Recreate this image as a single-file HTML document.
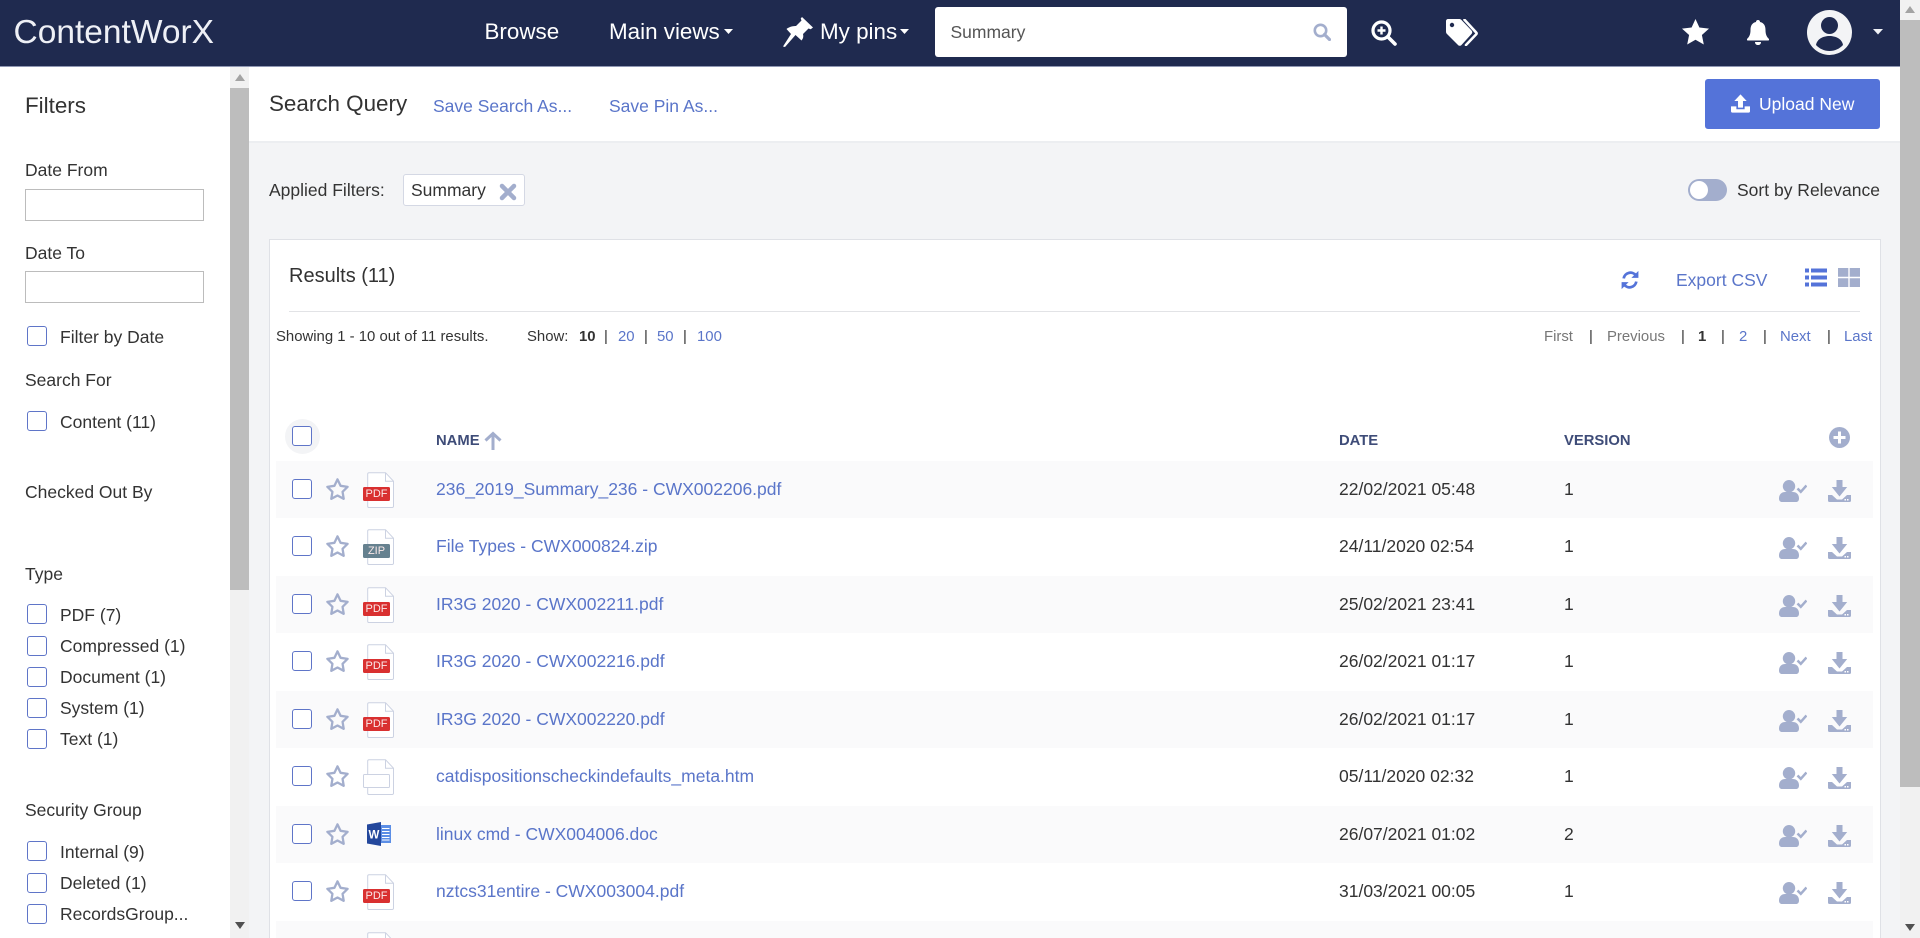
<!DOCTYPE html>
<html lang="en"><head><meta charset="utf-8"><title>ContentWorX</title>
<style>
html,body{margin:0;padding:0;width:1920px;height:938px;overflow:hidden;background:#fff}
body{position:relative;font-family:"Liberation Sans",Arial,sans-serif;font-size:17.5px;color:#333;}
.t,.b,svg.i{position:absolute}
.t{white-space:nowrap;line-height:20px;transform:translateY(-10px)}
.l{color:#5a75c9}
.s{font-size:14.9px}
.g{color:#777}
.h{font-size:14.8px;font-weight:bold;color:#3e4c78}
.cb{position:absolute;width:18px;height:18px;border:1.5px solid #5f75c8;border-radius:3px;background:#fff}
.r{position:absolute;left:276px;width:1597px;height:57.55px}
.r.o{background:#fafafb}
.r .t{top:28px}
.r .cb{left:16px;top:18px}
.n{left:160px;color:#5a75c9}
.d{left:1063px}
.v{left:1288px}
.badge{position:absolute;left:87px;top:26px;width:27px;height:14px;border-radius:1.5px;color:#fbe9e9;font-size:11px;line-height:14px;text-align:center}
</style></head><body>
<svg width="0" height="0" style="position:absolute">
<defs>
<symbol id="star" viewBox="2 2 20 20"><path d="M12 3.2l2.7 5.6 6.100.9-4.400 4.300 1 6.100L12 17.200l-5.400 2.900 1-6.100-4.400-4.300 6.100-.9z" fill="none" stroke="#a3aecd" stroke-width="2" stroke-linejoin="round"/></symbol>
<symbol id="doc" viewBox="0 0 32 36"><path d="M6 .7h16.500l8 8.500v25a1.300 1.300 0 0 1-1.300 1.300H6a1.300 1.300 0 0 1-1.300-1.300V2A1.300 1.300 0 0 1 6 .7z" fill="#fff" stroke="#ccd2e2" stroke-width="1"/><path d="M22.500.7v8.500h8" fill="none" stroke="#ccd2e2" stroke-width="1"/></symbol>
<symbol id="uc" viewBox="0 0 28 22"><circle cx="10" cy="6.200" r="6.200" fill="#a3aecd"/><path d="M0 18.500c0-4.500 3-6.500 6-6.500h8c3 0 6 2 6 6.500 0 2.300-1.200 3.500-3 3.500H3c-1.800 0-3-1.200-3-3.500z" fill="#a3aecd"/><path d="M18.500 8.500l3.300 3.300 5.700-6.300" fill="none" stroke="#a3aecd" stroke-width="2.500"/></svg-placeholder></symbol>
<symbol id="dl" viewBox="0 0 23 22"><path d="M8.500 0h6v7h4.700l-7.700 9.500L3.800 7h4.700z" fill="#a3aecd"/><path d="M0 15h4l5 4.500h5l5-4.500h4v5.500a1.500 1.500 0 0 1-1.500 1.500h-20A1.500 1.500 0 0 1 0 20.500z" fill="#a3aecd"/><rect x="16.500" y="19" width="1.500" height="1.500" fill="#fff"/><rect x="19" y="19" width="1.500" height="1.500" fill="#fff"/></symbol>
</defs></svg>

<!-- NAV -->
<div class="b" style="left:0;top:0;width:1900px;height:66px;background:#1f2a4f;border-bottom:1px solid #8f97b3"></div>
<div class="t" style="left:13.500px;top:33px;font-size:33.500px;line-height:40px;transform:translateY(-20px);color:#eef0f6">ContentWorX</div>
<div class="t" style="left:484.500px;top:32px;color:#fff;font-size:22.400px">Browse</div>
<div class="t" style="left:609px;top:32px;color:#fff;font-size:22.400px">Main views</div>
<svg class="i" style="left:724px;top:29px" width="9" height="6"><path d="M0 0h9L4.500 5z" fill="#fff"/></svg>
<svg class="i" style="left:783px;top:17px" width="31" height="30" viewBox="0 0 31 30"><path d="M19 0l11 10.500-2.300 1.800-2.200-.8-5.500 5.500c.8 3-.2 5-1.500 6.500l-6-5.500L2 30l-2-.5 8-12.500-4.500-5c2-1.700 6-3.200 9.500-3l5.500-5.500-.8-2z" fill="#fff"/></svg>
<div class="t" style="left:820px;top:32px;color:#fff;font-size:22.400px">My pins</div>
<svg class="i" style="left:900px;top:29px" width="9" height="6"><path d="M0 0h9L4.500 5z" fill="#fff"/></svg>
<div class="b" style="left:935px;top:7px;width:412px;height:50px;background:#fff;border-radius:3px"></div>
<div class="t" style="left:950.500px;top:32px;color:#555">Summary</div>
<svg class="i" style="left:1313px;top:23px" width="18" height="18" viewBox="0 0 18 18"><circle cx="7.500" cy="7.500" r="5.700" fill="none" stroke="#a3aecd" stroke-width="2.600"/><path d="M11.500 11.500l5 5" stroke="#a3aecd" stroke-width="3.200" stroke-linecap="round"/></svg>
<svg class="i" style="left:1371px;top:20px" width="26" height="26" viewBox="0 0 26 26"><circle cx="10.500" cy="10.500" r="8.500" fill="none" stroke="#fff" stroke-width="3.200"/><path d="M17 17l7 7" stroke="#fff" stroke-width="3.600" stroke-linecap="round"/><path d="M10.500 6.500v8M6.500 10.500h8" stroke="#fff" stroke-width="2.400"/></svg>
<svg class="i" style="left:1446px;top:19px" width="33" height="27" viewBox="0 0 33 27"><path d="M2 0h11c1 0 1.800.3 2.500 1l10 10.500c1 1 1 2.500 0 3.500l-10 11c-1 1-2.500 1-3.500 0L1 15C.3 14.300 0 13.500 0 12.500V2C0 .9.900 0 2 0z" fill="#fff"/><circle cx="6" cy="6" r="2.200" fill="#1f2a4f"/><path d="M18.500 0.800l11.500 12.500c.8.800.8 1.400 0 2.200L20 26" fill="none" stroke="#fff" stroke-width="2.600" stroke-linecap="round"/></svg>
<svg class="i" style="left:1682px;top:19px" width="27" height="26" viewBox="0 0 27 26"><path d="M13.500 0l3.900 8.500 9.600 1.100-7.100 6.400 1.900 9.500-8.300-4.800-8.300 4.800L7.100 16 0 9.600l9.600-1.100z" fill="#fff"/></svg>
<svg class="i" style="left:1747px;top:20px" width="22" height="25" viewBox="0 0 22 25"><path d="M11 0c1.200 0 2 .8 2 2 4 .8 5.500 4 5.500 8 0 5 1.500 7 3.500 9 .4.500.2 1.500-.8 1.500H.8C-.2 20.500-.4 19.500 0 19c2-2 3.500-4 3.500-9 0-4 1.500-7.200 5.500-8 0-1.200.8-2 2-2z" fill="#fff"/><path d="M8 22h6c0 2-1.200 3-3 3s-3-1-3-3z" fill="#fff"/></svg>
<svg class="i" style="left:1807px;top:9.500px" width="45" height="45" viewBox="0 0 45 45"><circle cx="22.500" cy="22.500" r="22.500" fill="#f3f4f6"/><circle cx="22.500" cy="15.500" r="8.500" fill="#1f2a4f"/><path d="M9 35c1-6 7-9 13.500-9S35 29 36 35c-3.500 3.800-8.300 6-13.500 6S12.500 38.800 9 35z" fill="#1f2a4f"/></svg>
<svg class="i" style="left:1873px;top:29px" width="10" height="6"><path d="M0 0h10L5 5.500z" fill="#f0f2f7"/></svg>

<!-- PAGE SCROLLBAR -->
<div class="b" style="left:1900px;top:0;width:20px;height:938px;background:#f1f1f1"></div>
<div class="b" style="left:1900px;top:20px;width:20px;height:767px;background:#bdbdbd"></div>
<svg class="i" style="left:1905px;top:6px" width="10" height="7"><path d="M5 0l5 7H0z" fill="#a3a3a3"/></svg>
<svg class="i" style="left:1905px;top:924px" width="10" height="7"><path d="M0 0h10L5 7z" fill="#505050"/></svg>

<!-- SIDEBAR -->
<div class="b" style="left:230px;top:67px;width:19px;height:871px;background:#f1f1f1"></div>
<div class="b" style="left:230px;top:88px;width:19px;height:502px;background:#bdbdbd"></div>
<svg class="i" style="left:234.500px;top:74px" width="10" height="7"><path d="M5 0l5 7H0z" fill="#a3a3a3"/></svg>
<svg class="i" style="left:234.500px;top:922px" width="10" height="7"><path d="M0 0h10L5 7z" fill="#505050"/></svg>
<div class="t" style="left:25px;top:106px;font-size:22.400px">Filters</div>
<div class="t" style="left:25px;top:170px">Date From</div>
<div class="b" style="left:25px;top:189px;width:177px;height:30px;border:1px solid #bcbcbc;background:#fff"></div>
<div class="t" style="left:25px;top:253px">Date To</div>
<div class="b" style="left:25px;top:271px;width:177px;height:30px;border:1px solid #bcbcbc;background:#fff"></div>
<div class="cb" style="left:27px;top:326px"></div><div class="t" style="left:60px;top:337px">Filter by Date</div>
<div class="t" style="left:25px;top:380px">Search For</div>
<div class="cb" style="left:27px;top:411px"></div><div class="t" style="left:60px;top:422px">Content (11)</div>
<div class="t" style="left:25px;top:492px">Checked Out By</div>
<div class="t" style="left:25px;top:574px">Type</div>
<div class="cb" style="left:27px;top:604px"></div><div class="t" style="left:60px;top:615px">PDF (7)</div>
<div class="cb" style="left:27px;top:636px"></div><div class="t" style="left:60px;top:646px">Compressed (1)</div>
<div class="cb" style="left:27px;top:667px"></div><div class="t" style="left:60px;top:677px">Document (1)</div>
<div class="cb" style="left:27px;top:698px"></div><div class="t" style="left:60px;top:708px">System (1)</div>
<div class="cb" style="left:27px;top:729px"></div><div class="t" style="left:60px;top:739px">Text (1)</div>
<div class="t" style="left:25px;top:810px">Security Group</div>
<div class="cb" style="left:27px;top:841px"></div><div class="t" style="left:60px;top:852px">Internal (9)</div>
<div class="cb" style="left:27px;top:873px"></div><div class="t" style="left:60px;top:883px">Deleted (1)</div>
<div class="cb" style="left:27px;top:904px"></div><div class="t" style="left:60px;top:914px">RecordsGroup...</div>

<!-- MAIN -->
<div class="b" style="left:249px;top:141px;width:1651px;height:797px;background:#f3f4f6;border-top:2px solid #eceef1;box-sizing:border-box"></div>
<div class="t" style="left:269px;top:104px;font-size:22.400px">Search Query</div>
<div class="t l" style="left:433px;top:106px">Save Search As...</div>
<div class="t l" style="left:609px;top:106px">Save Pin As...</div>
<div class="b" style="left:1705px;top:79px;width:175px;height:50px;background:#5473d9;border-radius:3px"></div>
<svg class="i" style="left:1731px;top:94px" width="19" height="19" viewBox="0 0 23 22"><path d="M11.500 0l7.500 8h-4.500v8h-6V8H4z" fill="#fff"/><path d="M0 14.500h6.500v3.500h10v-3.500H23v6a1.500 1.500 0 0 1-1.500 1.500h-20A1.500 1.500 0 0 1 0 20.500z" fill="#fff"/></svg>
<div class="t" style="left:1759px;top:104px;color:#fff">Upload New</div>
<div class="t" style="left:269px;top:190px">Applied Filters:</div>
<div class="b" style="left:403px;top:174px;width:120px;height:30px;background:#fff;border:1px solid #d4d8e4;border-radius:3px"></div>
<div class="t" style="left:411px;top:190px">Summary</div>
<svg class="i" style="left:499px;top:183px" width="18" height="18" viewBox="0 0 18 18"><path d="M3 3l12 12M15 3L3 15" stroke="#a3aecd" stroke-width="4.500" stroke-linecap="round"/></svg>
<div class="b" style="left:1688px;top:179px;width:39px;height:22px;border-radius:11px;background:#a3aecd"></div>
<div class="b" style="left:1690px;top:181px;width:18px;height:18px;border-radius:9px;background:#fff"></div>
<div class="t" style="left:1737px;top:190px">Sort by Relevance</div>

<!-- CARD -->
<div class="b" style="left:269px;top:239px;width:1610px;height:710px;background:#fff;border:1px solid #dfe1e6"></div>
<div class="t" style="left:289px;top:276px;font-size:20px">Results (11)</div>
<div class="b" style="left:289px;top:311px;width:1571px;height:1px;background:#e2e3e6"></div>
<svg class="i" style="left:1620px;top:270px" width="20" height="20" viewBox="0 0 19 19"><path d="M3.500 8A6.500 6.500 0 0 1 15 5" fill="none" stroke="#5473d9" stroke-width="2.600"/><path d="M17.500 .8v6.700h-6.700z" fill="#5473d9"/><path d="M15.500 11A6.500 6.500 0 0 1 4 14" fill="none" stroke="#5473d9" stroke-width="2.600"/><path d="M1.500 18.200v-6.700h6.700z" fill="#5473d9"/></svg>
<div class="t l" style="left:1676px;top:280px">Export CSV</div>
<svg class="i" style="left:1805px;top:268px" width="22" height="19" viewBox="0 0 22 19"><path d="M0 1h4v4H0zM6 1h16v4H6zM0 8h4v4H0zM6 8h16v4H6zM0 15h4v4H0zM6 15h16v4H6z" fill="#5473d9" transform="translate(0 -.5)"/></svg>
<svg class="i" style="left:1838px;top:268px" width="22" height="19" viewBox="0 0 22 19"><path d="M0 0h10.300v8.800H0zM11.700 0H22v8.800H11.700zM0 10.200h10.300V19H0zM11.700 10.200H22V19H11.700z" fill="#a3aecd"/></svg>

<div class="t s" style="left:276px;top:337px">Showing 1 - 10 out of 11 results.</div>
<div class="t s" style="left:527px;top:337px">Show:</div>
<div class="t s" style="left:579px;top:337px;font-weight:bold">10</div>
<div class="t s" style="left:604px;top:337px">|</div>
<div class="t s l" style="left:618px;top:337px">20</div>
<div class="t s" style="left:644px;top:337px">|</div>
<div class="t s l" style="left:657px;top:337px">50</div>
<div class="t s" style="left:683px;top:337px">|</div>
<div class="t s l" style="left:697px;top:337px">100</div>
<div class="t s g" style="left:1544px;top:337px">First</div>
<div class="t s" style="left:1589px;top:337px">|</div>
<div class="t s g" style="left:1607px;top:337px">Previous</div>
<div class="t s" style="left:1681px;top:337px">|</div>
<div class="t s" style="left:1698px;top:337px;font-weight:bold">1</div>
<div class="t s" style="left:1721px;top:337px">|</div>
<div class="t s l" style="left:1739px;top:337px">2</div>
<div class="t s" style="left:1763px;top:337px">|</div>
<div class="t s l" style="left:1780px;top:337px">Next</div>
<div class="t s" style="left:1827px;top:337px">|</div>
<div class="t s l" style="left:1844px;top:337px">Last</div>

<!-- TABLE HEAD -->
<div class="b" style="left:284.500px;top:419px;width:35px;height:35px;border-radius:50%;background:#f3f4f6"></div>
<div class="cb" style="left:292px;top:426px"></div>
<div class="t h" style="left:436px;top:441px">NAME</div>
<svg class="i" style="left:484px;top:431px" width="18" height="19" viewBox="0 0 18 19"><path d="M9 19V2.500M1.500 9.500L9 2.500l7.500 7" fill="none" stroke="#a3aecd" stroke-width="3"/></svg>
<div class="t h" style="left:1339px;top:441px">DATE</div>
<div class="t h" style="left:1564px;top:441px">VERSION</div>
<svg class="i" style="left:1828.500px;top:426.500px" width="21" height="21" viewBox="0 0 21 21"><circle cx="10.500" cy="10.500" r="10.500" fill="#a3aecd"/><path d="M10.500 4.500v12M4.500 10.500h12" stroke="#fff" stroke-width="3"/></svg>

<!-- ROWS -->
<div class="r o" style="top:460.500px"><div class="cb"></div><svg class="i" style="left:50px;top:17px" width="23" height="23"><use href="#star"/></svg><svg class="i" style="left:87px;top:11px" width="32" height="36"><use href="#doc"/></svg><div class="badge" style="background:#d93030">PDF</div><div class="t n">236_2019_Summary_236 - CWX002206.pdf</div><div class="t d">22/02/2021 05:48</div><div class="t v">1</div><svg class="i" style="left:1503px;top:19px" width="28" height="22"><use href="#uc"/></svg><svg class="i" style="left:1552px;top:19px" width="23" height="22"><use href="#dl"/></svg></div>
<div class="r" style="top:518px"><div class="cb"></div><svg class="i" style="left:50px;top:17px" width="23" height="23"><use href="#star"/></svg><svg class="i" style="left:87px;top:11px" width="32" height="36"><use href="#doc"/></svg><div class="badge" style="background:#66818f">ZIP</div><div class="t n">File Types - CWX000824.zip</div><div class="t d">24/11/2020 02:54</div><div class="t v">1</div><svg class="i" style="left:1503px;top:19px" width="28" height="22"><use href="#uc"/></svg><svg class="i" style="left:1552px;top:19px" width="23" height="22"><use href="#dl"/></svg></div>
<div class="r o" style="top:575.600px"><div class="cb"></div><svg class="i" style="left:50px;top:17px" width="23" height="23"><use href="#star"/></svg><svg class="i" style="left:87px;top:11px" width="32" height="36"><use href="#doc"/></svg><div class="badge" style="background:#d93030">PDF</div><div class="t n">IR3G 2020 - CWX002211.pdf</div><div class="t d">25/02/2021 23:41</div><div class="t v">1</div><svg class="i" style="left:1503px;top:19px" width="28" height="22"><use href="#uc"/></svg><svg class="i" style="left:1552px;top:19px" width="23" height="22"><use href="#dl"/></svg></div>
<div class="r" style="top:633.200px"><div class="cb"></div><svg class="i" style="left:50px;top:17px" width="23" height="23"><use href="#star"/></svg><svg class="i" style="left:87px;top:11px" width="32" height="36"><use href="#doc"/></svg><div class="badge" style="background:#d93030">PDF</div><div class="t n">IR3G 2020 - CWX002216.pdf</div><div class="t d">26/02/2021 01:17</div><div class="t v">1</div><svg class="i" style="left:1503px;top:19px" width="28" height="22"><use href="#uc"/></svg><svg class="i" style="left:1552px;top:19px" width="23" height="22"><use href="#dl"/></svg></div>
<div class="r o" style="top:690.700px"><div class="cb"></div><svg class="i" style="left:50px;top:17px" width="23" height="23"><use href="#star"/></svg><svg class="i" style="left:87px;top:11px" width="32" height="36"><use href="#doc"/></svg><div class="badge" style="background:#d93030">PDF</div><div class="t n">IR3G 2020 - CWX002220.pdf</div><div class="t d">26/02/2021 01:17</div><div class="t v">1</div><svg class="i" style="left:1503px;top:19px" width="28" height="22"><use href="#uc"/></svg><svg class="i" style="left:1552px;top:19px" width="23" height="22"><use href="#dl"/></svg></div>
<div class="r" style="top:748.300px"><div class="cb"></div><svg class="i" style="left:50px;top:17px" width="23" height="23"><use href="#star"/></svg><svg class="i" style="left:87px;top:11px" width="32" height="36"><use href="#doc"/></svg><div class="badge" style="background:#fff;border:1px solid #ccd2e2;box-sizing:border-box"></div><div class="t n">catdispositionscheckindefaults_meta.htm</div><div class="t d">05/11/2020 02:32</div><div class="t v">1</div><svg class="i" style="left:1503px;top:19px" width="28" height="22"><use href="#uc"/></svg><svg class="i" style="left:1552px;top:19px" width="23" height="22"><use href="#dl"/></svg></div>
<div class="r o" style="top:805.800px"><div class="cb"></div><svg class="i" style="left:50px;top:17px" width="23" height="23"><use href="#star"/></svg><svg class="i" style="left:91px;top:16.500px" width="24" height="24" viewBox="0 0 24 24"><path d="M14 3h10v18H14z" fill="#5b8ee6"/><path d="M15 6.500h7.500M15 9.500h7.500M15 12.500h7.500M15 15.500h7.500M15 18h7.500" stroke="#fff" stroke-width="1"/><path d="M0 2.500L14 0v24L0 21.500z" fill="#23479c"/><text x="1.500" y="16.500" font-family="Liberation Sans" font-size="11.500" font-weight="bold" fill="#fff">W</text></svg><div class="t n">linux cmd - CWX004006.doc</div><div class="t d">26/07/2021 01:02</div><div class="t v">2</div><svg class="i" style="left:1503px;top:19px" width="28" height="22"><use href="#uc"/></svg><svg class="i" style="left:1552px;top:19px" width="23" height="22"><use href="#dl"/></svg></div>
<div class="r" style="top:863.400px"><div class="cb"></div><svg class="i" style="left:50px;top:17px" width="23" height="23"><use href="#star"/></svg><svg class="i" style="left:87px;top:11px" width="32" height="36"><use href="#doc"/></svg><div class="badge" style="background:#d93030">PDF</div><div class="t n">nztcs31entire - CWX003004.pdf</div><div class="t d">31/03/2021 00:05</div><div class="t v">1</div><svg class="i" style="left:1503px;top:19px" width="28" height="22"><use href="#uc"/></svg><svg class="i" style="left:1552px;top:19px" width="23" height="22"><use href="#dl"/></svg></div>
<div class="r o" style="top:920.900px"><svg class="i" style="left:87px;top:11px" width="32" height="36"><use href="#doc"/></svg></div>
</body></html>
